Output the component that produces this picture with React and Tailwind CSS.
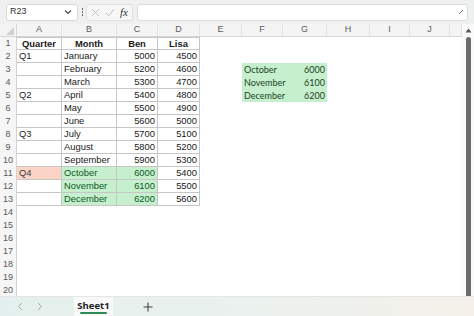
import React from "react";

const cols = [
  { k: "A", w: 45 },
  { k: "B", w: 55 },
  { k: "C", w: 41 },
  { k: "D", w: 42 },
  { k: "E", w: 42 },
  { k: "F", w: 41 },
  { k: "G", w: 44 },
  { k: "H", w: 43 },
  { k: "I", w: 40 },
  { k: "J", w: 40 },
  { k: "", w: 12 },
];

const table = [
  ["Quarter", "Month", "Ben", "Lisa"],
  ["Q1", "January", "5000", "4500"],
  ["", "February", "5200", "4600"],
  ["", "March", "5300", "4700"],
  ["Q2", "April", "5400", "4800"],
  ["", "May", "5500", "4900"],
  ["", "June", "5600", "5000"],
  ["Q3", "July", "5700", "5100"],
  ["", "August", "5800", "5200"],
  ["", "September", "5900", "5300"],
  ["Q4", "October", "6000", "5400"],
  ["", "November", "6100", "5500"],
  ["", "December", "6200", "5600"],
];

const side = {
  3: ["October", "6000"],
  4: ["November", "6100"],
  5: ["December", "6200"],
};

function Row({ r }) {
  const t = table[r - 1];
  return (
    <div className="flex h-[13px] shrink-0">
      <div className="w-[17px] shrink-0 border-r border-[#d4d4d4] bg-[#f6f6f6] text-[9px] leading-[13px] text-[#5a5a5a] text-center">
        {r}
      </div>
      {cols.map((c, ci) => {
        let content = null;
        let cls = "";
        if (t && ci < 4) {
          const v = t[ci];
          cls = "border-r border-b border-[#c6c6c6]" + (r === 1 ? " border-t" : "");
          const right = r > 1 && ci >= 2;
          const bold = r === 1;
          let bg = "";
          let color = "text-[#1a1a1a]";
          if (r === 11 && ci === 0) {
            bg = "bg-[#fbd4c6]";
            color = "text-[#3a3a3a]";
          }
          if (r >= 11 && (ci === 1 || ci === 2)) {
            bg = "bg-[#c6efce]";
            color = "text-[#0e5a1f]";
          }
          cls += " " + bg;
          content = (
            <div
              className={
                "h-full px-[2px] text-[9.4px] leading-[12px] whitespace-nowrap overflow-hidden " +
                color +
                (bold ? " font-bold text-center" : right ? " text-right" : " text-left")
              }
            >
              {v}
            </div>
          );
        } else if (side[r] && (ci === 5 || ci === 6)) {
          cls = "bg-[#c6efce]";
          const v = side[r][ci - 5];
          content = (
            <div
              className={
                "relative z-10 h-full px-[2px] text-[9px] leading-[13px] text-[#1d4426] whitespace-nowrap font-['Lato',sans-serif] " +
                (ci === 6 ? "text-right" : "text-left")
              }
            >
              {v}
            </div>
          );
        }
        return (
          <div key={ci} className={"shrink-0 h-[13px] " + cls} style={{ width: c.w }}>
            {content}
          </div>
        );
      })}
    </div>
  );
}

export default function App() {
  const rows = Array.from({ length: 21 }, (_, i) => i + 1);
  return (
    <div className="w-[474px] h-[316px] flex flex-col overflow-hidden bg-white font-['Liberation_Sans',Arial,sans-serif]">
      {/* formula bar */}
      <div className="h-[24px] shrink-0 flex items-center bg-[#eff1f1] pl-[6px] pr-[6px]">
        <div className="w-[72px] h-[17px] bg-white border border-[#d8d8d8] rounded-[3px] flex items-center justify-between pl-[3px] pr-[5px]">
          <span className="text-[9px] text-[#333]">R23</span>
          <svg width="8" height="6" viewBox="0 0 8 6">
            <path d="M1 1.5 L4 4.5 L7 1.5" fill="none" stroke="#444" strokeWidth="1.1" />
          </svg>
        </div>
        <div className="w-[9px] flex flex-col items-center gap-[1.5px]">
          <div className="w-[1.5px] h-[1.5px] bg-[#555] rounded-full" />
          <div className="w-[1.5px] h-[1.5px] bg-[#555] rounded-full" />
          <div className="w-[1.5px] h-[1.5px] bg-[#555] rounded-full" />
        </div>
        <div className="ml-[-1px] w-[47px] h-[17px] bg-[#f7f7f7] border border-[#e0e0e0] rounded-[3px] flex items-center justify-between px-[4px]">
          <svg width="9" height="9" viewBox="0 0 9 9">
            <path d="M1 1 L8 8 M8 1 L1 8" stroke="#c2c2c2" strokeWidth="1" />
          </svg>
          <svg width="10" height="9" viewBox="0 0 10 9">
            <path d="M1 5 L3.8 7.8 L9 1.2" fill="none" stroke="#c2c2c2" strokeWidth="1" />
          </svg>
          <span className="text-[11px] italic text-[#333] font-['Liberation_Serif',serif] leading-none">fx</span>
        </div>
        <div className="ml-[4px] flex-1 h-[17px] bg-white border border-[#dcdcdc] rounded-[3px] flex items-center justify-end pr-[3px]">
          <svg width="6" height="6" viewBox="0 0 6 6">
            <path d="M1 5 L5 1" stroke="#777" strokeWidth="1" />
          </svg>
        </div>
      </div>

      {/* main */}
      <div className="flex-1 flex min-h-0">
        <div className="flex-1 flex flex-col overflow-hidden min-w-0">
          {/* column headers */}
          <div className="flex h-[13px] shrink-0 bg-[#f4f4f4] border-b border-[#d6d6d6]">
            <div className="w-[17px] shrink-0 border-r border-[#d6d6d6] flex items-end justify-end pr-[2px] pb-[1px]">
              <svg width="8" height="8" viewBox="0 0 8 8">
                <path d="M8 0 L8 8 L0 8 Z" fill="#d0d0d0" />
              </svg>
            </div>
            {cols.map((c, i) => (
              <div
                key={i}
                className="shrink-0 h-full flex items-center justify-center text-[9px] text-[#5c5c5c] border-r border-[#e2e2e2]"
                style={{ width: c.w }}
              >
                {c.k}
              </div>
            ))}
          </div>
          {rows.map((r) => (
            <Row key={r} r={r} />
          ))}
        </div>
        {/* vertical scrollbar */}
        <div className="w-[12px] shrink-0 bg-[#fafafa] flex flex-col items-center pt-[4px]">
          <svg width="7" height="5" viewBox="0 0 7 5">
            <path d="M3.5 0.5 L6.5 4.5 L0.5 4.5 Z" fill="#555" />
          </svg>
          <div className="mt-[4px] w-[5px] flex-1 bg-[#6b6b6b] rounded-t-[3px]" />
        </div>
      </div>

      {/* tab bar */}
      <div className="h-[20px] shrink-0 flex items-stretch bg-gradient-to-r from-[#e4f0ed] via-[#eaf1ee] to-[#f5f1ea] border-t border-[#e6e6e6]">
        <div className="w-[74px] shrink-0 flex items-center pl-[17px] gap-[14px]">
          <svg width="6" height="9" viewBox="0 0 6 9">
            <path d="M5 1 L1.5 4.5 L5 8" fill="none" stroke="#a9a9a9" strokeWidth="1" />
          </svg>
          <svg width="6" height="9" viewBox="0 0 6 9">
            <path d="M1 1 L4.5 4.5 L1 8" fill="none" stroke="#a9a9a9" strokeWidth="1" />
          </svg>
        </div>
        <div className="w-[39px] shrink-0 bg-[#f8f9f8] flex flex-col items-center justify-center">
          <span className="text-[9.5px] font-bold text-[#222] leading-[11px] font-['Open_Sans',sans-serif]">Sheet1</span>
          <div className="w-[27px] h-[2px] bg-[#2f8a55] mt-[1px] rounded-full" />
        </div>
        <div className="flex items-center pl-[30px]">
          <svg width="10" height="10" viewBox="0 0 10 10">
            <path d="M5 0.5 L5 9.5 M0.5 5 L9.5 5" stroke="#444" strokeWidth="1.1" />
          </svg>
        </div>
      </div>
    </div>
  );
}
